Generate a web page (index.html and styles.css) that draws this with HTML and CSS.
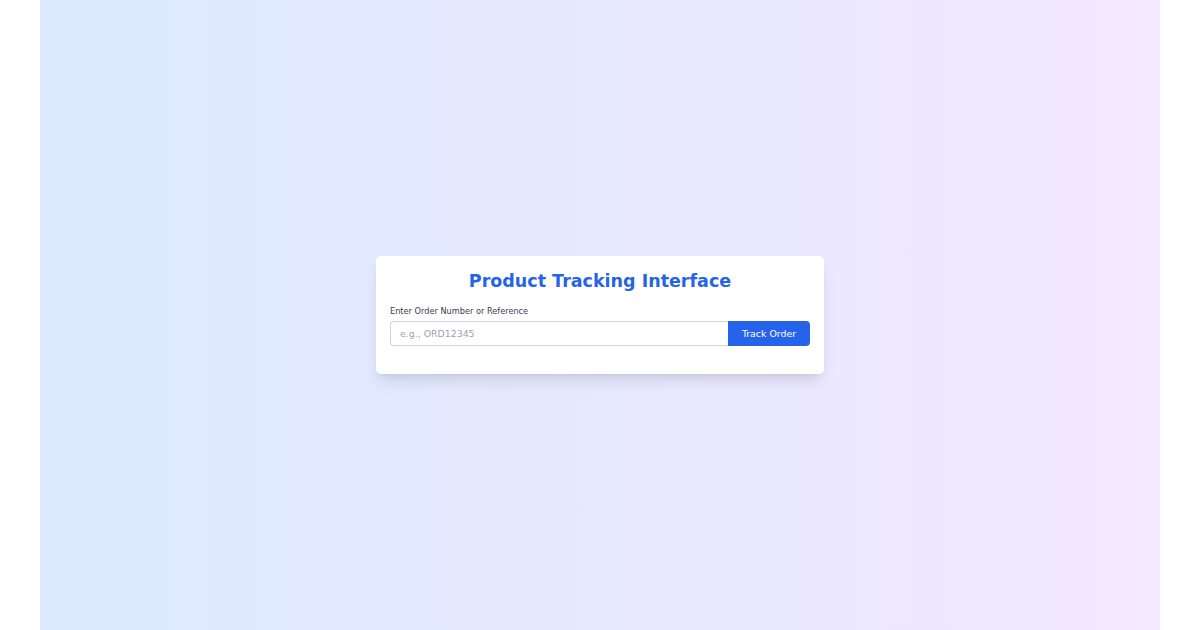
FILE: index.html
```html
<!DOCTYPE html>
<html lang="en">
<head>
    <meta charset="UTF-8">
    <meta name="viewport" content="width=device-width, initial-scale=1.0">
    <title>Product Tracking</title>
    <link rel="stylesheet" href="styles.css">
</head>
<body>
    <div class="page">
        <div class="card">
            <h1>Product Tracking Interface</h1>
            <label for="orderRef">Enter Order Number or Reference</label>
            <div class="search-row">
                <input type="text" id="orderRef" placeholder="e.g., ORD12345">
                <button class="btn">Track Order</button>
            </div>
        </div>
    </div>
</body>
</html>
```

FILE: styles.css
```css
body {
    font-family: "DejaVu Sans", sans-serif;
    margin: 0;
    padding: 0;
    background: #ffffff;
}
.page {
    width: 1120px;
    min-height: 630px;
    margin: 0 auto;
    background: linear-gradient(to right, #dbeafe, #f3e8ff);
    display: flex;
    align-items: center;
    justify-content: center;
}
.card {
    width: 448px;
    box-sizing: border-box;
    background: white;
    padding: 14px 14px 28px;
    border-radius: 5px;
    box-shadow: 0 10px 15px -3px rgba(0, 0, 0, 0.1), 0 4px 6px -4px rgba(0, 0, 0, 0.1);
}
h1 {
    margin: 0 0 14px;
    text-align: center;
    font-size: 17.5px;
    line-height: 22px;
    color: #2563eb;
}
label {
    display: block;
    font-size: 8.2px;
    color: #374151;
    margin-bottom: 5px;
}
.search-row {
    display: flex;
}
.search-row input {
    flex: 1;
    height: 25px;
    box-sizing: border-box;
    border: 1px solid #d1d5db;
    border-right: none;
    border-radius: 4px 0 0 4px;
    padding: 0 9px;
    font-family: inherit;
    font-size: 9.4px;
    color: #374151;
    outline: none;
}
.search-row input::placeholder {
    color: #9ca3af;
}
.btn {
    height: 25px;
    width: 82px;
    border: none;
    border-radius: 0 4px 4px 0;
    background-color: #2563eb;
    color: white;
    font-family: inherit;
    font-size: 9.4px;
    cursor: pointer;
}
```
